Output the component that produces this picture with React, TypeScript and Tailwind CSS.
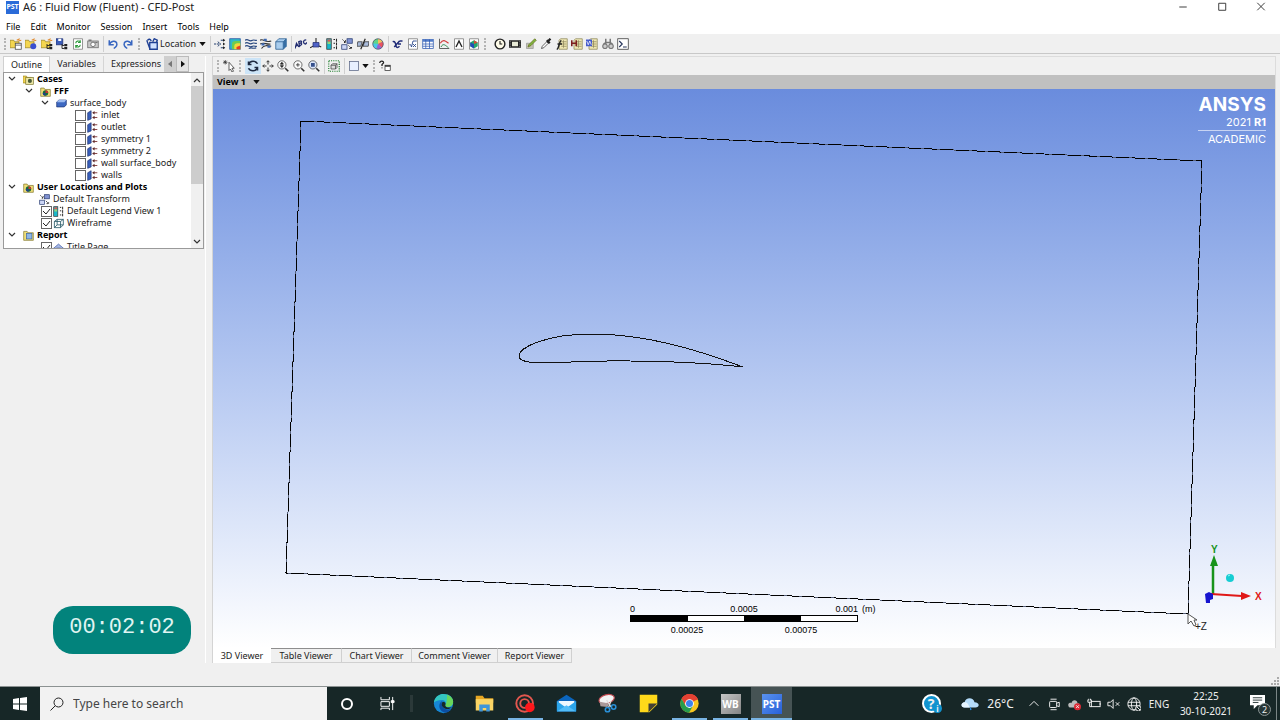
import React from "react";

type IconProps = { children: React.ReactNode; className?: string };

function Glyph({ children, className = "size-3" }: IconProps) {
  return (
    <svg viewBox="0 0 16 16" className={`shrink-0 ${className}`} fill="none" aria-hidden="true">
      {children}
    </svg>
  );
}

const folder = <path d="M0 3h5l1 2h6v8H0z" fill="#f4d651" stroke="#9a8424" />;
const spark = <path d="M9 3l4-2M11 4l4-1" stroke="#e08a2c" strokeWidth="1.4" />;
const tree = (
  <g fill="#222">
    <path d="M8 8v6h3M8 10h3" stroke="#222" strokeWidth="1.2" fill="none" />
    <rect x="11" y="8" width="4" height="3" />
    <rect x="11" y="12" width="4" height="3" />
  </g>
);
const page = <path d="M2 1h12v14H2z" fill="#fff" stroke="#777" />;
const sheet = (
  <g>
    <path d="M6 1h9v14H4V3z" fill="#efe8b4" stroke="#8d865a" />
    <path d="M7 5h7M7 8h7M7 11h7M10 3v10" stroke="#8d865a" />
  </g>
);

const icons: Record<string, React.ReactNode> = {
  loadResults: <>{folder}{spark}<rect x="7" y="7" width="8" height="8" fill="#fff" stroke="#444" /><path d="M7 9.500h8" stroke="#444" /></>,
  loadState: <>{folder}{spark}<circle cx="11" cy="11" r="4" fill="#3a4fd0" /></>,
  loadFolder: <>{folder}{spark}{tree}</>,
  saveState: <><path d="M0 1h9v8H0z" fill="#3a5cb8" stroke="#1c2d70" /><rect x="3" y="1" width="4" height="3" fill="#fff" />{tree}</>,
  refresh: <>{page}<path d="M5 7c0-3 4-4 6-2M11 3v3H8M11 9c0 3-4 4-6 2M5 13v-3h3" stroke="#2b9a3a" strokeWidth="1.500" /></>,
  camera: <><rect x="1" y="4" width="14" height="9" fill="#c8c8c8" stroke="#666" /><path d="M2 2h4v2H2z" fill="#777" /><circle cx="8" cy="8.500" r="3" fill="#fff" stroke="#555" /><path d="M11 6h3" stroke="#555" /></>,
  undo: <path d="M3 3v6h6M3 9c2-6 9-6 10-2 1 3-1 5-4 7" stroke="#3866c0" strokeWidth="2" />,
  redo: <path d="M13 3v6H7M13 9C11 3 4 3 3 7c-1 3 1 5 4 7" stroke="#3866c0" strokeWidth="2" />,
  location: <><path d="M5 6h10v9H5z" fill="#cfe0ff" stroke="#1d3f94" strokeWidth="1.800" /><path d="M1 3l4 11M2 3c2-2 4-2 5 1M9 5l2-4 4 2-1 3" stroke="#1d3f94" strokeWidth="1.800" /></>,
  vector: <><path d="M0 8h8M5 5l4 3-4 3M9 3h5M9 13h5" stroke="#223d6c" strokeWidth="1.300" strokeDasharray="3 1" /><path d="M12 1l3 2-3 2zM12 6l3 2-3 2zM12 11l3 2-3 2z" fill="#222" /></>,
  contour: <><rect x="1" y="1" width="14" height="14" fill="#2fb8c8" stroke="#1f4fa0" /><path d="M4 15V8c0-3 2-4 5-4h6v11z" fill="#6ccc50" /><path d="M7 15v-4c0-3 2-4 4-4h4v8z" fill="#f1d83b" /><path d="M10 15v-3l5-2v5z" fill="#e53c28" /></>,
  stream: <path d="M0 3c5-3 5 3 10 0 3-1 4 1 6 0M0 7c5-3 5 3 10 0 3-1 4 1 6 0M0 11c5-3 5 3 10 0 3-1 4 1 6 0M5 14c4-2 6 1 10-1" stroke="#27477f" strokeWidth="1.500" />,
  particle: <><path d="M0 3c5-3 6 4 15 1M0 8c6-3 8 1 14 0M2 14c3-5 8-4 13-3" stroke="#333" strokeWidth="1.500" /><path d="M5 1h4v3H5zM2 7h4v3H2zM10 10h4v3h-4z" fill="#3d67b0" /></>,
  volume: <><path d="M1 5l4-4h10v10l-4 4H1z" fill="#a9cdee" stroke="#24588c" /><path d="M1 5h10v10M11 5l4-4" stroke="#24588c" /><path d="M11 5l4-4v10l-4 4z" fill="#376ea4" /></>,
  text: <path d="M0 14l2-7 3 5M1 11l3-2M6 11L5 5l3-1c2 1 0 3-2 3 3-1 4 2 1 3zM15 3c-4-2-5 5-1 5l2-2" stroke="#202b70" strokeWidth="1.700" />,
  frame: <><path d="M8 0v10M8 9l7 3M8 9l-8 4" stroke="#222" strokeWidth="1.400" /><path d="M4 6h8v6H4z" fill="#4f63c7" stroke="#263074" /></>,
  legend: <><rect x="1" y="1" width="6" height="14" fill="#19b8cb" stroke="#333" /><rect x="2" y="2" width="4" height="3" fill="#e05a50" /><rect x="2" y="5" width="4" height="3" fill="#8fd67a" /><path d="M10 2h2M10 7h2M10 13h2M14 1v4M14 6v4M14 11v4" stroke="#222" strokeWidth="1.400" /></>,
  transform: <><rect x="8" y="1" width="7" height="6" fill="#8193d2" stroke="#24386f" /><rect x="1" y="9" width="7" height="6" fill="#cdd7f5" stroke="#24386f" /><path d="M2 2l4 4M6 3v3H3M10 10l4 4M11 14h3v-3" stroke="#222" strokeWidth="1.300" strokeDasharray="2 1" /></>,
  clip: <><path d="M1 5h6l-2 6H0zM10 5h6l-1 6H8z" fill="#a9bbdb" stroke="#333" /><path d="M11 1L5 15" stroke="#222" strokeWidth="1.600" /></>,
  wheel: <><circle cx="8" cy="8" r="7" fill="#48c9e8" /><path d="M8 8V1a7 7 0 016 4z" fill="#f3c15b" /><path d="M8 8l6-3a7 7 0 01-1 8z" fill="#ec5260" /><path d="M8 8l5 5a7 7 0 01-7 1z" fill="#a05bd0" /><path d="M8 8V1a7 7 0 00-7 6z" fill="#61d487" /><circle cx="8" cy="8" r="7" stroke="#556" /></>,
  variable: <path d="M1 5c4-2 4 6 5 7 1 1 3 0 4-1M10 4L3 12M10 4h4M8 8h4" stroke="#202c78" strokeWidth="2" />,
  expression: <>{page}<path d="M3 9h2l1 3 2-8h5M8 8l4 4M12 8l-4 4" stroke="#29478c" strokeWidth="1.200" /></>,
  table: <><rect x="1" y="2" width="14" height="12" fill="#fff" stroke="#315bb1" /><path d="M1 2h14v3H1z" fill="#527cc9" /><path d="M1 8h14M1 11h14M5 2v12M10 2v12" stroke="#315bb1" /></>,
  chart: <><path d="M2 1v13h13" stroke="#333" /><path d="M3 7c4-6 7-3 11 0" stroke="#d13939" strokeWidth="1.500" /><path d="M4 12c3-6 6-2 10 1" stroke="#28844a" strokeWidth="1.300" /></>,
  comment: <>{page}<path d="M4 12l4-8 4 8" stroke="#222" strokeWidth="1.800" /></>,
  figure: <>{page}<path d="M3 6l5-3 5 3v5l-5 3-5-3z" fill="#25a66b" /><path d="M3 6l5 2v6l-5-3z" fill="#244cb6" /><path d="M8 3l5 3-5 2z" fill="#d44b35" /></>,
  clock: <><circle cx="8" cy="8" r="6.500" fill="#fffce9" stroke="#222" strokeWidth="1.900" /><path d="M8 4v4h3" stroke="#222" strokeWidth="1.500" /></>,
  film: <><rect x="0" y="3" width="16" height="10" fill="#222" /><path d="M4 5h8v6H4z" fill="#e8ead6" /><path d="M1 5h1M1 8h1M1 11h1M14 5h1M14 8h1M14 11h1" stroke="#fff" /></>,
  quick: <><path d="M2 7h9v7H2z" fill="#c3c2b3" stroke="#999" /><path d="M5 9l8-8 2 2-7 7-4 2z" fill="#7fb53c" stroke="#687021" /></>,
  probe: <><path d="M2 14l1-3 6-6 2 2-6 6z" fill="#fff" stroke="#333" /><path d="M9 3l4 4M10 5l4-4" stroke="#222" strokeWidth="3" /></>,
  func: <>{sheet}<path d="M1 15c3 0 3-10 6-12M2 8h6" stroke="#222" strokeWidth="2" /></>,
  macro: <>{sheet}<path d="M1 3v8M7 3v8M1 7h6" stroke="#7c1d1d" strokeWidth="2.200" /></>,
  mesh: <>{sheet}<path d="M0 2h8v9H0z" fill="#455bcc" /><path d="M1 4l2 5 2-5 2 5" stroke="#fff" /></>,
  compare: <><path d="M5 1v7M11 1v7M2 8l3-2h6l3 2" stroke="#777" strokeWidth="2" /><circle cx="4" cy="11" r="3" fill="#ccc" stroke="#777" strokeWidth="1.500" /><circle cx="12" cy="11" r="3" fill="#ccc" stroke="#777" strokeWidth="1.500" /></>,
  console: <><rect x="1" y="1" width="14" height="14" fill="#fff" stroke="#333" /><path d="M3 4l4 4-4 4M8 12h5" stroke="#26355c" strokeWidth="1.500" /></>,
  select: <><path d="M3 0v6M0 3h6M1 1l4 4M5 1L1 5" stroke="#333" /><path d="M8 3v11l2-2 2 4 2-1-2-4h3z" fill="#fff" stroke="#333" /></>,
  rotate: <path d="M2 6c2-6 10-5 12-1M2 2v4h4M14 10c-2 6-10 5-12 1M14 14v-4h-4" stroke="#1d2940" strokeWidth="2.100" />,
  pan: <path d="M8 1v5M8 10v5M1 8h5M10 8h5M6 3l2-2 2 2M6 13l2 2 2-2M3 6L1 8l2 2M13 6l2 2-2 2" stroke="#333" strokeWidth="1.300" />,
  zoom: <><circle cx="6.500" cy="6.500" r="5.500" fill="#fafafa" stroke="#444" /><path d="M11 11l4 4" stroke="#333" strokeWidth="2.200" /><path d="M6.500 3l2 2.500h-4zM6.500 10l2-2.500h-4z" fill="#222" stroke="#222" /></>,
  zoomBox: <><circle cx="6.500" cy="6.500" r="5.500" fill="#fafafa" stroke="#444" /><path d="M11 11l4 4" stroke="#333" strokeWidth="2.200" /><path d="M6.500 4v5M4 6.500h5" stroke="#222" /></>,
  fit: <><circle cx="6.500" cy="6.500" r="5.500" fill="#dce6f8" stroke="#444" /><path d="M11 11l4 4" stroke="#333" strokeWidth="2.200" /><path d="M4 4h5v5H4z" fill="#36508c" /></>,
  highlight: <><rect x="1" y="1" width="14" height="14" stroke="#1e7e2d" strokeWidth="1.600" strokeDasharray="1.500 1.500" /><path d="M4 7l2-2h6v5l-2 2H4zM4 7h6v5M10 7l2-2" fill="#ddd" stroke="#444" /></>,
  viewport: <rect x="2" y="2" width="12" height="12" fill="#e8f0ff" stroke="#5a6684" />,
  help: <><path d="M1 4c0-4 6-3 5 0L4 6v2M4 10v1" stroke="#222" strokeWidth="1.700" /><rect x="8" y="7" width="7" height="7" fill="#fff" stroke="#333" /><path d="M8 8h7" stroke="#333" strokeWidth="2" /></>,
  cases: <>{folder}<rect x="4" y="5" width="11" height="10" fill="#efe9a7" stroke="#777027" /><circle cx="10" cy="10" r="3" fill="#4a5b37" /></>,
  results: <><path d="M1 3h5l1 2h8v10H1z" fill="#f0df78" stroke="#807529" /><circle cx="8" cy="10" r="4" fill="#176b3b" /><path d="M8 10V6a4 4 0 014 4z" fill="#c63631" /><path d="M8 10H4a4 4 0 004 4z" fill="#213f8e" /></>,
  domain: <><path d="M1 6l3-3h11v7l-3 3H1z" fill="#3d68c2" stroke="#1d3270" /><path d="M1 6l3-3h11l-3 3z" fill="#9dbbf0" /></>,
  boundary: <><path d="M1 4l5-3v12l-5 2z" fill="#385fba" stroke="#1e3474" /><path d="M9 4h6M9 11h6" stroke="#8d4a4a" strokeWidth="1.600" /><path d="M11 1.500v5L7.500 4zM11 8.500v5L7.500 11z" fill="#5a2a2a" /></>,
  wireframe: <path d="M2 5l4-3h9v8l-4 4H2zM2 5h9v9M11 5l4-3M6 2v8h9M6 10l-4 4" stroke="#245766" strokeWidth="1.200" />,
  report: <><path d="M1 2h5l1 2h8v11H1z" fill="#f0df78" stroke="#807529" /><rect x="5" y="5" width="8" height="8" fill="#8db6e8" stroke="#3b65a4" /></>,
  title: <><path d="M1 9l7-6 7 6-7 6z" fill="#a7b9e6" stroke="#3b54a0" /><path d="M5 9h6" stroke="#24386f" /></>,
};

function ToolGroup({ names, className }: { names: string[]; className: string }) {
  return (
    <div className={`flex shrink-0 items-center justify-between ${className}`}>
      {names.map((n) => (
        <button key={n} aria-label={n} className="shrink-0">
          <Glyph>{icons[n]}</Glyph>
        </button>
      ))}
    </div>
  );
}

const Sep = () => <span className="mr-[3px] ml-1 h-4 w-px shrink-0 bg-[#cfcfcf]" />;
const Grip = () => <span className="mx-1 h-3 shrink-0 border-l-2 border-dotted border-[#b4b4b4]" />;
const Caret = () => (
  <svg viewBox="0 0 8 5" className="h-1 w-[7px] shrink-0" aria-hidden="true"><path d="M0 0h8L4 5z" fill="#111" /></svg>
);
const Chevron = ({ up = false }: { up?: boolean }) => (
  <svg viewBox="0 0 8 8" className="size-2 shrink-0" fill="none" aria-hidden="true">
    <path d={up ? "M1 6l3-3 3 3" : "M1 2l3 3 3-3"} stroke="#333" strokeWidth="1.200" />
  </svg>
);

type Row = { label: string; icon: string; pad: string; open?: boolean; check?: boolean; bold?: boolean };
const rows: Row[] = [
  { label: "Cases", icon: "cases", pad: "pl-1", open: true, bold: true },
  { label: "FFF", icon: "results", pad: "pl-[21px]", open: true, bold: true },
  { label: "surface_body", icon: "domain", pad: "pl-[37px]", open: true },
  { label: "inlet", icon: "boundary", pad: "pl-[71px]", check: false },
  { label: "outlet", icon: "boundary", pad: "pl-[71px]", check: false },
  { label: "symmetry 1", icon: "boundary", pad: "pl-[71px]", check: false },
  { label: "symmetry 2", icon: "boundary", pad: "pl-[71px]", check: false },
  { label: "wall surface_body", icon: "boundary", pad: "pl-[71px]", check: false },
  { label: "walls", icon: "boundary", pad: "pl-[71px]", check: false },
  { label: "User Locations and Plots", icon: "results", pad: "pl-1", open: true, bold: true },
  { label: "Default Transform", icon: "transform", pad: "pl-[35px]" },
  { label: "Default Legend View 1", icon: "legend", pad: "pl-[37px]", check: true },
  { label: "Wireframe", icon: "wireframe", pad: "pl-[37px]", check: true },
  { label: "Report", icon: "report", pad: "pl-1", open: true, bold: true },
  { label: "Title Page", icon: "title", pad: "pl-[37px]", check: true },
];

function TreeRow({ label, icon, pad, open, check, bold }: Row) {
  const content = (
    <>
      {check !== undefined && (
        <span className="relative mr-px size-[11px] shrink-0">
          <input type="checkbox" defaultChecked={check} className="peer block size-[11px] appearance-none border border-[#666] bg-white" />
          <svg viewBox="0 0 11 11" className="pointer-events-none absolute inset-0 hidden peer-checked:block" fill="none" aria-hidden="true">
            <path d="M2 5l3 3 4-5" stroke="#222" />
          </svg>
        </span>
      )}
      <Glyph className="size-[11px]">{icons[icon]}</Glyph>
      <span className={`ml-[3px] whitespace-nowrap ${bold ? "font-bold text-black" : ""}`}>{label}</span>
    </>
  );
  return (
    <li className={`flex h-3 items-center ${pad}`}>
      {open && <button aria-label={`Collapse ${label}`} className="mr-[7px]"><Chevron /></button>}
      {check !== undefined ? <label className="flex items-center">{content}</label> : content}
    </li>
  );
}

function Sidebar() {
  return (
    <aside className="relative flex w-[206px] shrink-0 flex-col border-r border-white pl-[3px]">
      <div className="flex h-4 shrink-0 items-stretch" role="tablist">
        <button role="tab" aria-selected="true" className="w-[47px] border border-b-0 border-[#d0d0d0] bg-white">Outline</button>
        <button role="tab" className="w-[54px] border-r border-[#d5d5d5]">Variables</button>
        <button role="tab" className="w-[60px] pl-1">Expressions</button>
        <button aria-label="Previous tab" className="flex w-3 items-center justify-center bg-[#cfcfcf]">
          <svg viewBox="0 0 5 8" className="h-2 w-1"><path d="M5 0v8L0 4z" fill="#777" /></svg>
        </button>
        <button aria-label="Next tab" className="flex w-[13px] items-center justify-center border border-[#bbb] bg-[#e4e4e4]">
          <svg viewBox="0 0 5 8" className="h-2 w-1"><path d="M0 0v8l5-4z" fill="#111" /></svg>
        </button>
      </div>
      <div className="mr-px flex h-[177px] shrink-0 overflow-hidden border border-[#9a9a9a] bg-white">
        <ul className="min-w-0 flex-1">
          {rows.map((r) => <TreeRow key={r.label} {...r} />)}
        </ul>
        <div className="flex w-3 shrink-0 flex-col items-center bg-[#f0f0f0]">
          <button aria-label="Scroll up" className="flex h-[13px] items-center"><Chevron up /></button>
          <span className="h-[98px] w-full bg-[#cdcdcd]" />
          <span className="flex-1" />
          <button aria-label="Scroll down" className="flex h-[13px] items-center"><Chevron /></button>
        </div>
      </div>
      <time className="absolute bottom-[9px] left-[53px] flex h-12 w-[138px] items-center justify-center rounded-[20px] bg-[#02837c] pb-1 font-['Liberation_Mono',monospace] text-[22px] text-[#e0f5f2]">
        00:02:02
      </time>
    </aside>
  );
}

function Viewer() {
  const frame = "M88 32L989 72L975 525L73 484Z";
  const foil = "M530 278C480 259 430 245 379 245C332 245 306 259 306 267C306 274 320 274 350 273.500C385 271 470 271 530 278Z";
  return (
    <div className="relative min-h-0 flex-1 bg-linear-to-b from-[#6a8cdd] to-white">
      <svg viewBox="0 0 1062 559" className="block size-full" fill="none" role="img" aria-label="Airfoil wireframe">
        <path d={frame} stroke="#56607a" shapeRendering="crispEdges" />
        <path d={frame} stroke="#000" strokeDasharray="13 3" shapeRendering="crispEdges" />
        <path d={foil} stroke="#111" shapeRendering="crispEdges" />
        <path d="M1000 505V477" stroke="#17931b" strokeWidth="2.500" />
        <path d="M1001 466l4 11h-8z" fill="#17931b" />
        <path d="M998 505l31 2" stroke="#e01818" strokeWidth="2" />
        <path d="M1028 503l10 4-10 4z" fill="#e01818" />
        <path d="M992 505l4-2 4 2v5l-3 1v3h-4z" fill="#1614cf" />
        <circle cx="1017" cy="489" r="4" fill="#16cdd3" />
        <path d="M1015 487l2-1" stroke="#9ff4f4" />
        <g fontFamily="'Liberation Sans', sans-serif" fontSize="10">
          <text x="998" y="464" fill="#17931b" fontWeight="bold">Y</text>
          <text x="1042" y="511" fill="#e01818" fontWeight="bold">X</text>
          <text x="982" y="541" fill="#222">+Z</text>
        </g>
        <path d="M975 525v10l3-3 3 5 2-1-2-5h3z" fill="#fff" stroke="#555" />
      </svg>
      <div className="absolute top-[5px] right-[9px] flex w-[68px] flex-col items-end font-[Inter,sans-serif] text-white">
        <strong className="text-[19px] leading-[21px]">ANSYS</strong>
        <span className="text-[11px] leading-[14px]">2021 <b>R1</b></span>
        <span className="mt-px w-full border-t border-white/60 pt-[2px] text-right text-[11px] leading-3">ACADEMIC</span>
      </div>
      <div className="absolute bottom-3 left-[417px] w-[228px] font-['Liberation_Sans',sans-serif] text-[9px] leading-3 text-black">
        <div className="grid grid-cols-3">
          <span>0</span><span className="text-center">0.0005</span><span className="relative text-right">0.001<span className="absolute left-full ml-1">(m)</span></span>
        </div>
        <div className="flex h-[7px] border border-black bg-white">
          <span className="w-1/4 bg-black" /><span className="w-1/4" /><span className="w-1/4 bg-black" />
        </div>
        <div className="flex justify-around pt-[2px]"><span>0.00025</span><span>0.00075</span></div>
      </div>
    </div>
  );
}

const viewerTabs = [
  { label: "Table Viewer", w: "w-[71px]" },
  { label: "Chart Viewer", w: "w-[70px]" },
  { label: "Comment Viewer", w: "w-[86px]" },
  { label: "Report Viewer", w: "w-[74px]" },
];

function Tile({ text, blue = false }: { text: string; blue?: boolean }) {
  return (
    <span className={`flex size-5 items-center justify-center font-['Noto_Sans',sans-serif] text-[10px] font-bold text-white ${blue ? "bg-linear-to-br from-[#5a92ef] to-[#2860d8]" : "bg-linear-to-br from-[#c5c5c5] to-[#858585]"}`}>{text}</span>
  );
}

const art = (children: React.ReactNode) => <svg viewBox="0 0 24 24" className="size-[21px]" fill="none" aria-hidden="true">{children}</svg>;

const apps: { name: string; icon: React.ReactNode; running?: boolean; active?: boolean }[] = [
  {
    name: "Edge",
    icon: art(<>
      <circle cx="12" cy="12" r="11" fill="#1686d4" />
      <path d="M1 11C2 4 7 1 12 1c7 0 11 4 11 9 0 4-3 6-6 6-2 0-3-1-3-2 2-4-1-6-4-6-4 0-7 1-9 3z" fill="#34c6c0" />
      <path d="M16 2c5 2 7 5 7 8 0 4-3 6-6 6-2 0-3-1-3-2 2-3 2-7 2-12z" fill="#69d65b" />
      <path d="M10 9c-4 3-4 10 2 13 4 1 7-1 9-4-5 2-10 0-11-5z" fill="#0c4ea2" />
      <path d="M11 10c-2 3-1 6 3 8 3 1 6 0 8-2-3 1-8 1-8-2 1-2 0-4-3-4z" fill="#172727" />
    </>),
  },
  { name: "Explorer", icon: art(<><path d="M2 3h8l2 3h10v5H2z" fill="#e5a623" /><path d="M2 7h20v13H2z" fill="#fbd565" /><path d="M6 13h12v8h-4v-4h-4v4H6z" fill="#4096d9" /></>) },
  { name: "Recorder", running: true, icon: art(<><circle cx="11" cy="12" r="9.500" stroke="#e3574f" strokeWidth="2.200" /><circle cx="11" cy="12" r="5" stroke="#e3574f" strokeWidth="2.200" /><circle cx="17" cy="16.500" r="5.500" fill="#ff171b" /></>) },
  { name: "Mail", icon: art(<><path d="M1 9l11-7 11 7v12H1z" fill="#0b65bd" /><path d="M3 9h18v5l-9 5-9-5z" fill="#eef8ff" /><path d="M1 9l11 8-11 4z" fill="#2ba4ea" /><path d="M23 9l-11 8 11 4z" fill="#2ba4ea" /><path d="M1 21l11-7 11 7z" fill="#52bdf8" /></>) },
  { name: "Snip", icon: art(<><ellipse cx="11" cy="7" rx="9" ry="5" fill="#f3f3f3" stroke="#c44a50" strokeWidth="1.300" transform="rotate(-15 11 7)" /><path d="M3 10l11 2-2 4-8-1z" fill="#a99" /><path d="M11 8l5 8M16 9l-3 8" stroke="#ddd" strokeWidth="1.500" /><circle cx="12" cy="19" r="2.500" stroke="#2a90d8" strokeWidth="1.800" /><circle cx="19" cy="16" r="2.500" stroke="#2a90d8" strokeWidth="1.800" /></>) },
  { name: "Sticky Notes", icon: art(<><path d="M2 2h20v11l-9 9H2z" fill="#ffd91a" /><path d="M22 12L12 22V12z" fill="#444034" /></>) },
  { name: "Chrome", running: true, icon: art(<><circle cx="12" cy="12" r="10.500" fill="#f8c51f" /><path d="M12 12L3 6.500a10.500 10.500 0 0118.500 0.500z" fill="#e44133" /><path d="M12 7h9.700A10.500 10.500 0 003 6.500l4.500 8z" fill="#e44133" /><path d="M3 6.500A10.500 10.500 0 0011.500 22.500l4.500-8-8.500 0z" fill="#279c4d" /><circle cx="12" cy="12" r="5" fill="#fff" /><circle cx="12" cy="12" r="4" fill="#3d82ec" /></>) },
  { name: "Workbench", running: true, icon: <Tile text="WB" /> },
  { name: "CFD-Post", running: true, active: true, icon: <Tile text="PST" blue /> },
];

const tray: { name: string; icon: React.ReactNode }[] = [
  { name: "Show hidden icons", icon: <path d="M3 10l5-5 5 5" /> },
  { name: "Meet now", icon: <><rect x="3" y="5" width="8" height="7" rx="1" /><path d="M11 7l3-1v5l-3-1M4 2.500h7M4 14.500h7" /></> },
  { name: "OneDrive", icon: <><path d="M2 11c-2-4 2-5 3-4 1-5 7-4 7 0 4 0 3 4 1 5H3z" fill="#bbb" stroke="none" /><circle cx="12" cy="11" r="4" fill="#df2935" stroke="none" /><path d="M10.500 9.500l3 3M13.500 9.500l-3 3" /></> },
  { name: "Battery", icon: <><rect x="5" y="5" width="10" height="6" /><path d="M15 7v2M1 3v3h4V3M3 6v5h2M2 2v2M4 2v2" /></> },
  { name: "Volume", icon: <path d="M1 6h3l3-3v10l-3-3H1zM10 6l4 4M14 6l-4 4" /> },
  { name: "Network", icon: <><circle cx="8" cy="8" r="7" /><ellipse cx="8" cy="8" rx="3" ry="7" /><path d="M1 6h14M1 10h14" /><circle cx="13" cy="13" r="3" fill="#172727" /><path d="M11 11l4 4" /></> },
];

function Taskbar() {
  return (
    <footer className="flex h-[34px] shrink-0 items-stretch border-t border-[#8c9292] bg-[#172727] font-['Noto_Sans',sans-serif] text-[11px] text-[#f0f0f0]">
      <button aria-label="Start" className="flex w-10 items-center justify-center">
        <svg viewBox="0 0 14 14" className="size-[14px]" fill="#fff"><path d="M0 2l6-1v5.500H0zM7 .9L14 0v6.500H7zM0 7.500h6V13l-6-1zM7 7.500h7V14l-7-.9z" /></svg>
      </button>
      <label className="flex w-[287px] items-center bg-[#f2f2f2] pl-[10px] text-[#444]">
        <svg viewBox="0 0 14 14" className="size-[14px]" fill="none" stroke="#222"><circle cx="8.500" cy="5.500" r="4.500" /><path d="M5.300 8.700L.5 13.500" /></svg>
        <input aria-label="Search" placeholder="Type here to search" className="ml-[9px] w-48 bg-transparent text-[12px] outline-none placeholder:text-[#454545]" />
      </label>
      <button aria-label="Cortana" className="flex w-10 items-center justify-center"><span className="size-3 rounded-full border-2 border-white" /></button>
      <button aria-label="Task view" className="flex w-10 items-center justify-center">
        <svg viewBox="0 0 16 16" className="size-[15px]" fill="none" stroke="#fff"><path d="M1 1v3h9V1M1 6h9v5H1zM1 15v-2h9v2M13.500 1v14" /><path d="M12 5h3v2h-3z" fill="#fff" /></svg>
      </button>
      <span className="mx-[3px] my-2 w-[3px] self-stretch bg-[#2b3939]" />
      <span className="w-[7px]" />
      {apps.map((a) => (
        <button key={a.name} aria-label={a.name} className={`relative flex w-[41px] items-center justify-center ${a.active ? "bg-[#465354]" : ""}`}>
          {a.icon}
          {a.running && <span className={`absolute bottom-0 h-[2px] bg-[#79b4e4] ${a.active ? "inset-x-0" : "inset-x-[3px]"}`} />}
        </button>
      ))}
      <span className="flex-1" />
      <button aria-label="Help" className="relative flex w-10 items-center justify-center">
        <span className="flex size-[19px] items-center justify-center rounded-full border-2 border-white bg-[#1193cf] text-[14px] font-bold">?</span>
        <span className="absolute right-[9px] bottom-[7px] flex size-[9px] items-center justify-center rounded-full bg-[#1193cf] text-[8px] font-bold">i</span>
      </button>
      <button className="flex w-[73px] items-center justify-center gap-2 text-[12px]">
        <svg viewBox="0 0 20 16" className="h-4 w-[18px]" fill="none"><path d="M4 12C-1 12 0 6 4 6c1-6 10-6 11 0 6 0 6 6 1 6z" fill="#b5dcfa" /><path d="M4 12C-1 12 0 6 4 6c4 0 4 3 6 6z" fill="#e6f4ff" /><path d="M10 11l2 3-2 1z" fill="#2487e0" /></svg>
        26°C
      </button>
      {tray.map((t) => (
        <button key={t.name} aria-label={t.name} className="flex w-5 items-center justify-center">
          <svg viewBox="0 0 16 16" className="size-[14px]" fill="none" stroke="#f0f0f0" strokeWidth="1.100">{t.icon}</svg>
        </button>
      ))}
      <button className="w-[30px] text-center text-[10px]">ENG</button>
      <div className="flex w-[64px] flex-col justify-center text-center text-[10px] leading-[15px]"><span>22:25</span><span className="whitespace-nowrap">30-10-2021</span></div>
      <button aria-label="Notifications" className="relative flex w-[38px] items-center justify-center pb-1">
        <svg viewBox="0 0 16 16" className="size-[15px]"><path d="M0 1h16v11H8l-4 4v-4H0z" fill="#fff" /><path d="M3 4h10M3 6.500h10M3 9h6" stroke="#253434" /></svg>
        <span className="absolute right-[5px] bottom-1 flex size-[13px] items-center justify-center rounded-full border border-[#8a9494] bg-[#263535] text-[9px]">2</span>
      </button>
      <span className="mr-[3px] w-px bg-[#7b8686]" />
    </footer>
  );
}

export default function App() {
  return (
    <div className="flex h-screen min-h-[420px] flex-col overflow-hidden bg-[#f0f0f0] font-['Noto_Sans',sans-serif] text-[9px] leading-3 text-[#222]">
      <header className="shrink-0 bg-white">
        <div className="flex h-5 items-start justify-between pl-[6px]">
          <h1 className="flex items-center gap-1 font-['Noto_Sans',sans-serif] text-[11px] leading-[14px] font-normal text-[#222]">
            <span className="flex size-[13px] items-center justify-center bg-[#2a6bd8] text-[7px] font-bold text-white">PST</span>
            A6 : Fluid Flow (Fluent) - CFD-Post
          </h1>
          <div className="flex">
            {["M4 7.500h8", "M4.500 3.500h7.500v7.500H4.500z", "M4 3l8 8M12 3l-8 8"].map((d, i) => (
              <button key={d} aria-label={["Minimize", "Maximize", "Close"][i]} className="flex w-[39px] justify-center">
                <svg viewBox="0 0 16 15" className="h-[14px] w-4" fill="none" stroke="#333"><path d={d} /></svg>
              </button>
            ))}
          </div>
        </div>
        <nav className="flex h-[14px] items-center gap-[10px] pl-[6px] text-black">
          {["File", "Edit", "Monitor", "Session", "Insert", "Tools", "Help"].map((m) => <button key={m}>{m}</button>)}
        </nav>
      </header>
      <div className="flex h-5 shrink-0 items-center border-b border-[#c8c8c8]">
        <Grip />
        <ToolGroup className="w-[89px]" names={["loadResults", "loadState", "loadFolder", "saveState", "refresh", "camera"]} />
        <Sep />
        <ToolGroup className="w-[27px]" names={["undo", "redo"]} />
        <Grip />
        <button className="ml-[2px] flex w-[60px] items-center gap-[2px]"><Glyph>{icons.location}</Glyph>Location<span className="ml-auto"><Caret /></span></button>
        <Sep />
        <ToolGroup className="w-[73px]" names={["vector", "contour", "stream", "particle", "volume"]} />
        <Sep />
        <ToolGroup className="w-[89px]" names={["text", "frame", "legend", "transform", "clip", "wheel"]} />
        <Sep />
        <ToolGroup className="w-[88px]" names={["variable", "expression", "table", "chart", "comment", "figure"]} />
        <Grip />
        <ToolGroup className="ml-1 w-[135px]" names={["clock", "film", "quick", "probe", "func", "macro", "mesh", "compare", "console"]} />
      </div>
      <main className="flex min-h-0 flex-1 pt-[2px]">
        <Sidebar />
        <section className="ml-[6px] flex min-w-0 flex-1 flex-col border-l border-[#d4d4d4]">
          <div className="mr-1 flex min-h-0 flex-1 flex-col border-t border-r border-[#dcdcdc]">
            <div className="flex h-[18px] shrink-0 items-center">
              <Grip />
              <ToolGroup className="w-3" names={["select"]} />
              <Grip />
              <button aria-label="Rotate" className="flex size-4 items-center justify-center bg-[#cce4f7]"><Glyph>{icons.rotate}</Glyph></button>
              <ToolGroup className="ml-px w-[58px]" names={["pan", "zoom", "zoomBox", "fit"]} />
              <Sep />
              <ToolGroup className="w-3" names={["highlight"]} />
              <Sep />
              <button aria-label="Viewport layout" className="flex items-center gap-[2px]"><Glyph>{icons.viewport}</Glyph><Caret /></button>
              <Grip />
              <ToolGroup className="w-3" names={["help"]} />
            </div>
            <button className="flex h-[14px] shrink-0 items-center gap-[7px] bg-[#c0c0c0] pl-1 font-bold text-black">View 1 <Caret /></button>
            <Viewer />
          </div>
          <div className="flex h-[15px] shrink-0 items-stretch" role="tablist">
            <button role="tab" aria-selected="true" className="w-[58px] bg-white">3D Viewer</button>
            {viewerTabs.map((t) => (
              <button role="tab" key={t.label} className={`border-t border-r border-b border-t-[#8e8e8e] border-r-[#d0d0d0] border-b-[#d0d0d0] ${t.w}`}>{t.label}</button>
            ))}
          </div>
        </section>
      </main>
      <div className="flex h-[23px] shrink-0 items-end justify-end">
        <svg viewBox="0 0 9 9" className="size-[9px]" fill="#aaa" aria-hidden="true"><path d="M6 0h2v2H6zM3 3h2v2H3zM6 3h2v2H6zM0 6h2v2H0zM3 6h2v2H3zM6 6h2v2H6z" /></svg>
      </div>
      <Taskbar />
    </div>
  );
}
